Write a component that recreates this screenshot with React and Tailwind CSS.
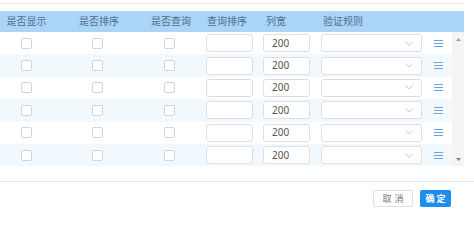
import React from "react";

const rows = [0, 1, 2, 3, 4, 5];

function Checkbox() {
  return <div className="w-[11px] h-[11px] border border-[#d4d4d4] rounded-[2px] bg-white" />;
}

function MenuIcon() {
  return (
    <svg width="9" height="7" viewBox="0 0 9 7">
      <rect x="0" y="0" width="9" height="1" fill="#6aa6e6" />
      <rect x="0" y="3" width="9" height="1" fill="#6aa6e6" />
      <rect x="0" y="6" width="9" height="1" fill="#6aa6e6" />
    </svg>
  );
}

export default function App() {
  return (
    <div
      className="w-[474px] h-[212px] bg-white overflow-hidden flex flex-col"
      style={{ fontFamily: '"Noto Sans", "Noto Sans CJK SC", sans-serif' }}
    >
      <div className="h-[3px]" />
      <div className="w-[463px] h-px bg-[#ebebeb]" />
      <div className="h-[7px]" />
      <div className="w-[464px] h-[21px] bg-[#aad5f6] flex items-center text-[10px] text-[#4e6f8e]">
        <div className="w-[53px] flex justify-center">是否显示</div>
        <div className="w-[92px] flex justify-center">是否排序</div>
        <div className="w-[52px] flex justify-center">是否查询</div>
        <div className="w-[65px] pl-[10px]">查询排序</div>
        <div className="w-[58px] pl-[4px]">列宽</div>
        <div className="pl-[3px]">验证规则</div>
      </div>
      <div className="w-[464px] flex">
        <div className="w-[452px] flex flex-col">
          {rows.map((i) => (
            <div
              key={i}
              className={`h-[22.4px] flex items-center ${i % 2 === 1 ? "bg-[#f1f8fe]" : "bg-white"}`}
            >
              <div className="w-[53px] flex justify-center"><Checkbox /></div>
              <div className="w-[89px] flex justify-center"><Checkbox /></div>
              <div className="w-[55px] flex justify-center"><Checkbox /></div>
              <div className="w-[65px] pl-[9px]">
                <div className="w-[47px] h-[18px] border border-[#dcdfe6] rounded-[3px] bg-white" />
              </div>
              <div className="w-[58px] pl-px">
                <div className="w-[47px] h-[18px] border border-[#dcdfe6] rounded-[3px] bg-white flex items-center pl-[8px] text-[10px] text-[#555]">
                  200
                </div>
              </div>
              <div className="w-[114px] pl-px">
                <div className="w-[101px] h-[18px] border border-[#dcdfe6] rounded-[3px] bg-white flex items-center justify-end pr-[8px]">
                  <svg width="8" height="5" viewBox="0 0 8 5">
                    <path d="M0.5 0.5 L4 4 L7.5 0.5" fill="none" stroke="#c8c8c8" strokeWidth="0.9" />
                  </svg>
                </div>
              </div>
              <div className="flex items-center"><MenuIcon /></div>
            </div>
          ))}
        </div>
        <div className="w-[12px] bg-[#f4f4f4] flex flex-col items-center justify-between pt-[6px] pb-[5px]">
          <svg width="5" height="3" viewBox="0 0 5 3"><path d="M0 3 L2.5 0 L5 3 Z" fill="#a0a0a0" /></svg>
          <svg width="5" height="3" viewBox="0 0 5 3"><path d="M0 0 L2.5 3 L5 0 Z" fill="#808080" /></svg>
        </div>
      </div>
      <div className="h-[15px]" />
      <div className="w-full h-px bg-[#e8e8e8]" />
      <div className="flex justify-end pr-[23px] pt-[8px] gap-[7px]">
        <div className="w-[40px] h-[17px] border border-[#dcdfe6] bg-white rounded-[2px] flex items-center justify-center text-[9px] text-[#777] tracking-[3px] pl-[3px]">
          取消
        </div>
        <div className="w-[31px] h-[17px] bg-[#1f8cf0] rounded-[2px] flex items-center justify-center text-[9px] text-white font-bold tracking-[2px] pl-[2px]">
          确定
        </div>
      </div>
    </div>
  );
}
